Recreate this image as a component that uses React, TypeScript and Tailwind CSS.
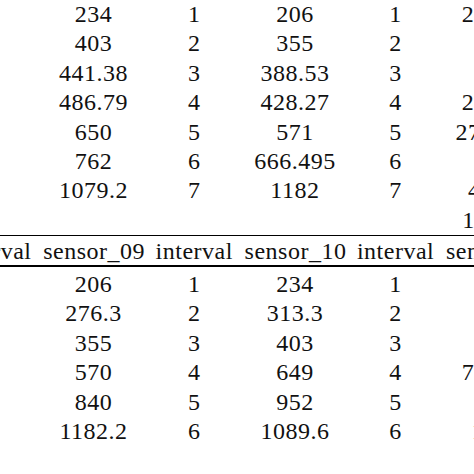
const topRows: string[][] = [
  ["1", "234", "1", "206", "1", "206.95"],
  ["2", "403", "2", "355", "2", "355"],
  ["3", "441.38", "3", "388.53", "3", "403"],
  ["4", "486.79", "4", "428.27", "4", "234.36"],
  ["5", "650", "5", "571", "5", "275.605"],
  ["6", "762", "6", "666.495", "6", "570"],
  ["7", "1079.2", "7", "1182", "7", "403.6"],
  ["", "", "", "", "", "1182.2"],
];

const header = ["interval", "sensor_09", "interval", "sensor_10", "interval", "sensor_11"];

const bottomRows: string[][] = [
  ["1", "206", "1", "234", "1", "206"],
  ["2", "276.3", "2", "313.3", "2", "355"],
  ["3", "355", "3", "403", "3", "403"],
  ["4", "570", "4", "649", "4", "705.85"],
  ["5", "840", "5", "952", "5", "952"],
  ["6", "1182.2", "6", "1089.6", "6", "1182"],
];

function Row({ cells, className }: { cells: string[]; className: string }) {
  return (
    <div className={`grid grid-cols-[repeat(6,100.7px)] ${className}`}>
      {cells.map((c, i) => (
        <div key={i} className="text-center whitespace-nowrap">
          {c}
        </div>
      ))}
    </div>
  );
}

export default function App() {
  return (
    <div className="h-[474px] w-[474px] overflow-hidden bg-white font-['Liberation_Serif',serif] text-[24px] tracking-[0.5px] text-[#111]">
      <div className="ml-[-57.5px] w-[604px]">
        <div className="flex flex-col">
          {topRows.map((r, i) => (
            <Row key={i} cells={r} className="h-[29.4px] leading-[29.4px]" />
          ))}
        </div>

        <div className="border-t-[1.5px] border-b-2 border-black pt-px">
          <Row cells={header} className="h-[27.5px] leading-[28.5px]" />
        </div>

        <div className="flex flex-col pt-[3px]">
          {bottomRows.map((r, i) => (
            <Row key={i} cells={r} className="h-[29.5px] leading-[29.5px]" />
          ))}
        </div>
      </div>
    </div>
  );
}
